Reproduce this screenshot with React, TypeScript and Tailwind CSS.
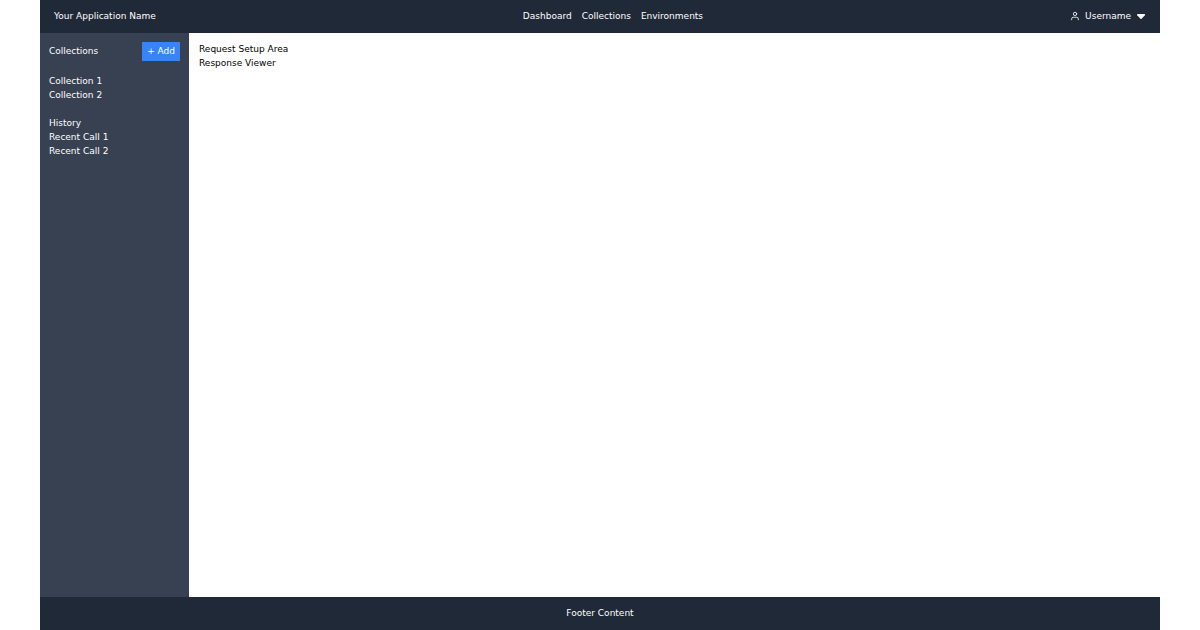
import { FiUser } from 'react-icons/fi';

const navLinks = ['Dashboard', 'Collections', 'Environments'];
const collections = ['Collection 1', 'Collection 2'];
const recentCalls = ['Recent Call 1', 'Recent Call 2'];

function CaretIcon() {
  return (
    <svg className="w-[10px] h-[10px]" viewBox="0 0 20 20" fill="currentColor" aria-hidden="true">
      <path d="M3.4 6h13.2c1.2 0 1.8 1.4 1 2.3l-6.4 7c-.7.7-1.7.7-2.4 0l-6.4-7C1.600 7.400 2.200 6 3.400 6z" />
    </svg>
  );
}

function Header() {
  return (
    <header className="flex items-center justify-between h-[33px] px-[14px] pb-px bg-[#1f2937] text-white">
      <div>Your Application Name</div>
      <nav className="flex gap-[10px]">
        {navLinks.map((name) => (
          <a key={name} href={`#${name.toLowerCase()}`}>{name}</a>
        ))}
      </nav>
      <button type="button" className="flex items-center gap-[5px]">
        <FiUser className="w-[10px] h-[10px]" aria-hidden="true" />
        <span>Username</span>
        <CaretIcon />
      </button>
    </header>
  );
}

function Sidebar() {
  return (
    <aside className="w-[149px] shrink-0 p-[9px] bg-[#374151] text-white">
      <div className="flex items-start justify-between mb-[13px] leading-[18px]">
        <h2>Collections</h2>
        <button type="button" className="px-[5px] pb-px bg-[#3b82f6]">+ Add</button>
      </div>
      <ul className="mb-[14px]">
        {collections.map((name) => <li key={name}>{name}</li>)}
      </ul>
      <h2>History</h2>
      <ul>
        {recentCalls.map((name) => <li key={name}>{name}</li>)}
      </ul>
    </aside>
  );
}

function App() {
  return (
    <div className="min-h-screen px-10 bg-white flex flex-col font-['DejaVu_Sans',sans-serif] text-[9px] leading-[14px] text-black">
      <Header />
      <div className="flex flex-1">
        <Sidebar />
        <main className="flex-1 px-[10px] py-[9px]">
          <div>Request Setup Area</div>
          <div>Response Viewer</div>
        </main>
      </div>
      <footer className="flex items-center justify-center h-[33px] pb-px bg-[#1f2937] text-white">
        Footer Content
      </footer>
    </div>
  );
}

export default App;
